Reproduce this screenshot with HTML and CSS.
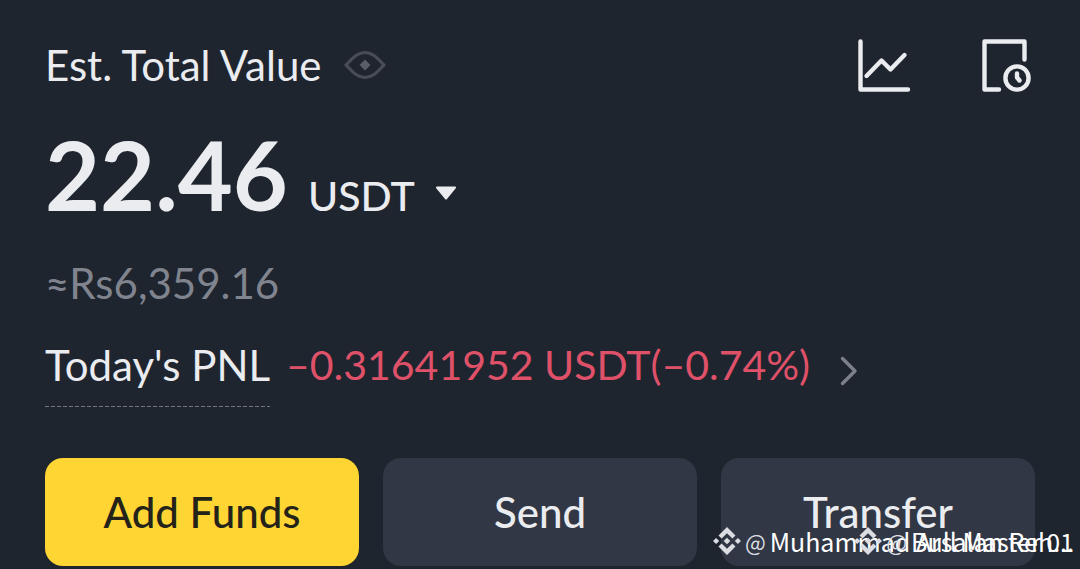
FILE: index.html
```html
<!DOCTYPE html>
<html lang="en">
<head>
<meta charset="utf-8">
<meta name="viewport" content="width=device-width, initial-scale=1">
<title>Wallet overview</title>
<link rel="stylesheet" href="styles.css">
</head>
<body>
<main class="wallet">
  <header class="top">
    <h1 class="title">Est. Total Value</h1>
    <button class="icon-button eye" type="button" aria-label="Hide balance">
      <svg width="42" height="30" viewBox="0 0 42 30" fill="none" stroke="#484c56" stroke-width="3.2" stroke-linejoin="round"><path d="M2 15C8 9 13 2.5 21 2.5S34 9 40 15C34 21 29 27.500 21 27.500S8 21 2 15Z"/><path d="M21 9.500L26.500 15L21 20.500L15.500 15Z" fill="#5a5e68" stroke="none"/></svg>
    </button>
    <nav class="tools" aria-label="Account tools">
      <button class="icon-button" type="button" aria-label="Statistics">
        <svg width="54" height="54" viewBox="0 0 54 54" fill="none" stroke="#eaecef" stroke-width="4.400" stroke-linecap="round" stroke-linejoin="round"><path d="M3.500 3.500V51.500H51"/><path d="M9.500 38L24.500 22.500L33.500 31.500L47.500 17"/></svg>
      </button>
      <button class="icon-button" type="button" aria-label="History">
        <svg width="50" height="54" viewBox="0 0 50 54" fill="none" stroke="#eaecef" stroke-width="4.400" stroke-linecap="round" stroke-linejoin="round"><path d="M18 51.500H3.500V3.500H43.500V21.500"/><circle cx="36" cy="40" r="11.600"/><path d="M36 35.500V39.500L38.500 42.500"/></svg>
      </button>
    </nav>
  </header>
  <div class="balance">
    <strong class="amount">22.46</strong>
    <button class="currency" type="button">USDT
      <svg width="22" height="15" viewBox="0 0 22 15" fill="#eaecef" stroke="#eaecef" stroke-width="2" stroke-linejoin="round" aria-hidden="true"><path d="M2 1.500H20L11 12.500Z"/></svg>
    </button>
  </div>
  <p class="fiat">≈Rs6,359.16</p>
  <a class="pnl" href="#pnl">
    <span class="pnl-label">Today's PNL</span>
    <span class="pnl-value">–0.31641952 USDT(–0.74%)</span>
    <svg class="chevron" width="18" height="30" viewBox="0 0 18 30" fill="none" stroke="#7b808a" stroke-width="3.400" stroke-linecap="round" stroke-linejoin="round" aria-hidden="true"><path d="M2.500 2.500L15 15L2.500 27.500"/></svg>
  </a>
  <div class="actions">
    <button class="action primary" type="button">Add Funds</button>
    <button class="action" type="button">Send</button>
    <button class="action" type="button">Transfer</button>
  </div>
  <div class="mark">
    <svg width="28" height="28" viewBox="0 0 28 28" fill="#dcdde2" aria-hidden="true"><path d="M14 0L22.500 8.500L19.400 11.600L14 6.200L8.600 11.600L5.500 8.500ZM14 28L5.500 19.500L8.600 16.400L14 21.800L19.400 16.400L22.500 19.500ZM3.100 10.900L6.200 14L3.100 17.100L0 14ZM24.900 10.900L28 14L24.900 17.100L21.800 14ZM14 10.700L17.300 14L14 17.300L10.700 14Z"/></svg>
    <span class="at">@</span><span>Muhammad Arsalan Reh...</span>
  </div>
  <div class="mark">
    <svg width="28" height="28" viewBox="0 0 28 28" fill="#dcdde2" aria-hidden="true"><path d="M14 0L22.500 8.500L19.400 11.600L14 6.200L8.600 11.600L5.500 8.500ZM14 28L5.500 19.500L8.600 16.400L14 21.800L19.400 16.400L22.500 19.500ZM3.100 10.900L6.200 14L3.100 17.100L0 14ZM24.900 10.900L28 14L24.900 17.100L21.800 14ZM14 10.700L17.300 14L14 17.300L10.700 14Z"/></svg>
    <span class="at">@</span><span>Bull Master 01</span>
  </div>
</main>
</body>
</html>
```
FILE: styles.css
```css
* {
  box-sizing: border-box;
}

body {
  margin: 0;
  background: #1f252f;
  color: #eaecef;
  font-family: Lato, "Liberation Sans", sans-serif;
  font-size: 42px;
  line-height: 48px;
}

button {
  border: 0;
  padding: 0;
  background: none;
  color: inherit;
  font: inherit;
  cursor: pointer;
}

svg {
  display: block;
}

.wallet {
  position: relative;
  padding: 38px 45px 3px;
}

.top {
  display: flex;
  align-items: center;
  height: 54px;
}

.title {
  margin: 0;
  font-size: 42px;
  font-weight: 400;
}

.eye {
  margin-left: 22px;
}

.tools {
  display: flex;
  gap: 70px;
  margin: 0 4px 0 auto;
}

.balance {
  display: flex;
  align-items: baseline;
  gap: 20px;
  margin-top: 30px;
}

.amount {
  font-size: 95px;
  line-height: 104px;
  font-weight: 700;
}

.currency {
  display: flex;
  align-items: center;
  gap: 20px;
  font-size: 41px;
  font-weight: 500;
}

.currency svg {
  margin-bottom: 6px;
}

.fiat {
  margin: 33px 0 0;
  color: #80848f;
}

.pnl {
  display: flex;
  align-items: flex-start;
  margin-top: 34px;
  color: inherit;
  text-decoration: none;
}

.pnl-label {
  padding-bottom: 18px;
  background: repeating-linear-gradient(90deg, #70747e 0 4px, transparent 4px 6px) left bottom / 100% 1px no-repeat;
}

.pnl-value {
  margin-left: 16px;
  color: #df5168;
  font-size: 41px;
}

.chevron {
  margin: 15px 0 0 30px;
}

.actions {
  display: grid;
  grid-template-columns: repeat(3, 1fr);
  gap: 24px;
  margin-top: 51px;
}

.action {
  height: 108px;
  border-radius: 18px;
  background: #313744;
  font-weight: 500;
}

.primary {
  background: #fed533;
  color: #24231a;
}

.mark {
  position: absolute;
  right: 6px;
  bottom: 10px;
  display: flex;
  align-items: center;
  gap: 4px;
  color: #fff;
  font: 25px/36px "Noto Sans CJK SC", sans-serif;
  white-space: nowrap;
}

.at {
  color: #dcdde2;
  font-size: 22px;
}
```
